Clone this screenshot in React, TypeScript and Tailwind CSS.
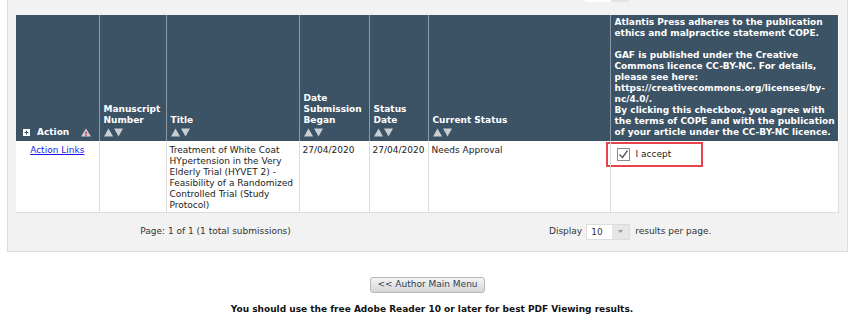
import { useState } from 'react'

function SortArrows() {
  return (
    <svg width="19" height="9" viewBox="0 0 19 9" className="block mt-[2px]">
      <polygon points="0,8.5 4.5,0.5 9,8.5" fill="#c9ced3" />
      <polygon points="10,0.5 19,0.5 14.5,8.5" fill="#c9ced3" />
    </svg>
  )
}

export default function App() {
  const [accepted, setAccepted] = useState(true)

  const th = 'align-bottom text-left font-bold text-white border-l border-[#8a9aa8] px-[4px] pb-[4px] pt-[2px]'
  const td = 'align-top border-l border-[#dddddd] px-[3px] pt-[4px]'

  return (
    <div
      className="w-[864px] h-[316px] overflow-hidden bg-white text-[9px] leading-[11px] text-[#222]"
      style={{ fontFamily: '"DejaVu Sans", Verdana, sans-serif' }}
    >
      {/* grey panel */}
      <div className="ml-[7px] w-[841px] bg-[#f2f2f2] border border-t-0 border-[#dcdcdc]">
        {/* remains of the select above */}
        <div className="h-[15px] flex pl-[577px]">
          <div className="w-[26px] h-[2px] bg-white" />
          <div className="w-[18px] h-[2px] bg-[#e4e4e4]" />
        </div>

        <table className="ml-[8px] w-[822px] table-fixed border-collapse bg-white">
          <colgroup>
            <col className="w-[83px]" />
            <col className="w-[67px]" />
            <col className="w-[133px]" />
            <col className="w-[70px]" />
            <col className="w-[59px]" />
            <col className="w-[182px]" />
            <col className="w-[228px]" />
          </colgroup>
          <thead>
            <tr className="bg-[#3c5366] h-[126px]">
              <th className="align-bottom text-left font-bold text-white px-[7px] pb-[3px]">
                <div className="flex items-center">
                  <span className="w-[7px] h-[7px] bg-white flex items-center justify-center mr-[7px]">
                    <svg width="5" height="5" viewBox="0 0 5 5">
                      <path d="M2.5 0.5v4M0.5 2.5h4" stroke="#3c5366" strokeWidth="1" />
                    </svg>
                  </span>
                  <span>Action</span>
                  <svg width="10" height="9" viewBox="0 0 10 9" className="ml-[12px]">
                    <polygon points="0,8.5 5,0.5 10,8.5" fill="#c9ced3" />
                    <rect x="4.3" y="3.5" width="1.4" height="3" fill="#e0303a" />
                    <rect x="4.3" y="7" width="1.4" height="1" fill="#e0303a" />
                  </svg>
                </div>
              </th>
              <th className={th}>
                Manuscript<br />Number
                <SortArrows />
              </th>
              <th className={th}>
                Title
                <SortArrows />
              </th>
              <th className={th}>
                Date<br />Submission<br />Began
                <SortArrows />
              </th>
              <th className={th}>
                Status<br />Date
                <SortArrows />
              </th>
              <th className={th}>
                Current Status
                <SortArrows />
              </th>
              <th className="align-top text-left font-bold text-white border-l border-[#8a9aa8] px-[4px] pt-[2px] whitespace-nowrap">
                Atlantis Press adheres to the publication<br />
                ethics and malpractice statement COPE.<br />
                <br />
                GAF is published under the Creative<br />
                Commons licence CC-BY-NC. For details,<br />
                please see here:<br />
                https://creativecommons.org/licenses/by-<br />
                nc/4.0/.<br />
                By clicking this checkbox, you agree with<br />
                the terms of COPE and with the publication<br />
                of your article under the CC-BY-NC licence.
              </th>
            </tr>
          </thead>
          <tbody>
            <tr className="h-[71px] border-b border-[#dddddd]">
              <td className="align-top text-center pt-[4px]">
                <a href="#" className="text-[#1a1ae6] underline">Action Links</a>
              </td>
              <td className={td}></td>
              <td className={`${td} whitespace-nowrap`}>
                Treatment of White Coat<br />
                HYpertension in the Very<br />
                Elderly Trial (HYVET 2) -<br />
                Feasibility of a Randomized<br />
                Controlled Trial (Study<br />
                Protocol)
              </td>
              <td className={td}>27/04/2020</td>
              <td className={td}>27/04/2020</td>
              <td className={td}>Needs Approval</td>
              <td className="align-top border-l border-r border-[#dddddd] pt-[1px]">
                <label className="ml-[-5px] w-[97px] h-[25px] border-2 border-[#e8434a] flex items-center pl-[9px]">
                  <span
                    onClick={() => setAccepted(!accepted)}
                    className="w-[13px] h-[13px] border border-[#8a8a8a] bg-white flex items-center justify-center"
                  >
                    {accepted && (
                      <svg width="11" height="11" viewBox="0 0 11 11">
                        <path d="M1.5 5.5l3 3 5-7" fill="none" stroke="#555" strokeWidth="1.3" />
                      </svg>
                    )}
                  </span>
                  <span className="ml-[6px]">I accept</span>
                </label>
              </td>
            </tr>
          </tbody>
        </table>

        {/* pagination */}
        <div className="h-[38px] flex items-center text-[#333]">
          <div className="w-[415px] text-center">Page: 1 of 1 (1 total submissions)</div>
          <div className="flex items-center ml-[126px]">
            <span>Display</span>
            <div className="ml-[4px] flex h-[16px] border border-[#dcdcdc] bg-white">
              <span className="w-[25px] flex items-center pl-[4px] pt-[2px]">10</span>
              <span className="w-[17px] bg-[#e6e6e6] flex items-center justify-center">
                <svg width="5" height="3" viewBox="0 0 5 3">
                  <polygon points="0,0 5,0 2.5,3" fill="#999" />
                </svg>
              </span>
            </div>
            <span className="ml-[5px]">results per page.</span>
          </div>
        </div>
      </div>

      {/* back button */}
      <div className="flex justify-center mt-[25px]">
        <button className="h-[16px] px-[6px] rounded-[3px] border border-[#b8b8b8] bg-gradient-to-b from-[#f4f4f4] to-[#d6d6d6] text-[#2e3e52] text-[9px] leading-[11px] ml-[-9px]">
          &lt;&lt; Author Main Menu
        </button>
      </div>

      <p className="mt-[11px] text-center font-bold text-[#111]">
        You should use the free Adobe Reader 10 or later for best PDF Viewing results.
      </p>
    </div>
  )
}
